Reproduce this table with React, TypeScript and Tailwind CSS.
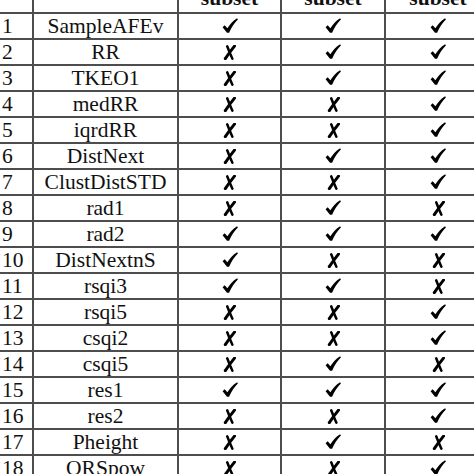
const rows: [string, string, boolean, boolean, boolean][] = [
  ["1", "SampleAFEv", true, true, true],
  ["2", "RR", false, true, true],
  ["3", "TKEO1", false, true, true],
  ["4", "medRR", false, false, true],
  ["5", "iqrdRR", false, false, true],
  ["6", "DistNext", false, true, true],
  ["7", "ClustDistSTD", false, false, true],
  ["8", "rad1", false, true, false],
  ["9", "rad2", true, true, true],
  ["10", "DistNextnS", true, false, false],
  ["11", "rsqi3", true, true, false],
  ["12", "rsqi5", false, false, true],
  ["13", "csqi2", false, false, true],
  ["14", "csqi5", false, true, false],
  ["15", "res1", true, true, true],
  ["16", "res2", false, false, true],
  ["17", "Pheight", false, true, false],
  ["18", "QRSpow", false, false, true],
];

const cell = "h-[26px] border-b-2 border-r-2 border-[#4d4d4d] flex items-center";
const head = "h-[14px] border-b-2 border-r-2 border-[#4d4d4d] flex items-end justify-center overflow-hidden";

function Mark({ ok }: { ok: boolean }) {
  if (ok) {
    return (
      <svg width="16" height="15" viewBox="0 0 16 15" className="-mt-[2px]">
        <path
          d="M0.6 9.2 L2.7 7.3 L5.4 10.3 C7.8 6.2 11 2.8 15.1 0.2 L15.9 1.4 C12.4 4.7 9.6 8.9 7.1 14.7 L5 14.7 Z"
          fill="#000"
        />
      </svg>
    );
  }
  return (
    <svg width="13" height="15" viewBox="0 0 13 15">
      <path d="M4.2 1.3 C5.6 5 7.4 9.6 9.4 13.7" stroke="#000" strokeWidth="2.5" fill="none" strokeLinecap="round" />
      <path d="M11.5 1.1 C8.6 4.6 5.4 9 2.3 13.7" stroke="#000" strokeWidth="3" fill="none" strokeLinecap="round" />
    </svg>
  );
}

export default function App() {
  return (
    <div className="w-[474px] h-[474px] overflow-hidden bg-white">
      <div
        className="grid w-[492px] grid-cols-[34px_145px_103px_104px_106px] text-[21.5px] text-[#111]"
        style={{ fontFamily: '"Liberation Serif", "Times New Roman", serif' }}
      >
        <div className={head} />
        <div className={head} />
        {[0, 1, 2].map((i) => (
          <div key={i} className={head}>
            <span className="mb-[3px] font-bold leading-[21px]">subset</span>
          </div>
        ))}
        {rows.map(([n, name, a, b, c]) => (
          <div key={n} className="contents">
            <div className={`${cell} pl-[2px]`}>{n}</div>
            <div className={`${cell} justify-center`}>{name}</div>
            <div className={`${cell} justify-center`}><Mark ok={a} /></div>
            <div className={`${cell} justify-center`}><Mark ok={b} /></div>
            <div className={`${cell} justify-center`}><Mark ok={c} /></div>
          </div>
        ))}
      </div>
    </div>
  );
}
